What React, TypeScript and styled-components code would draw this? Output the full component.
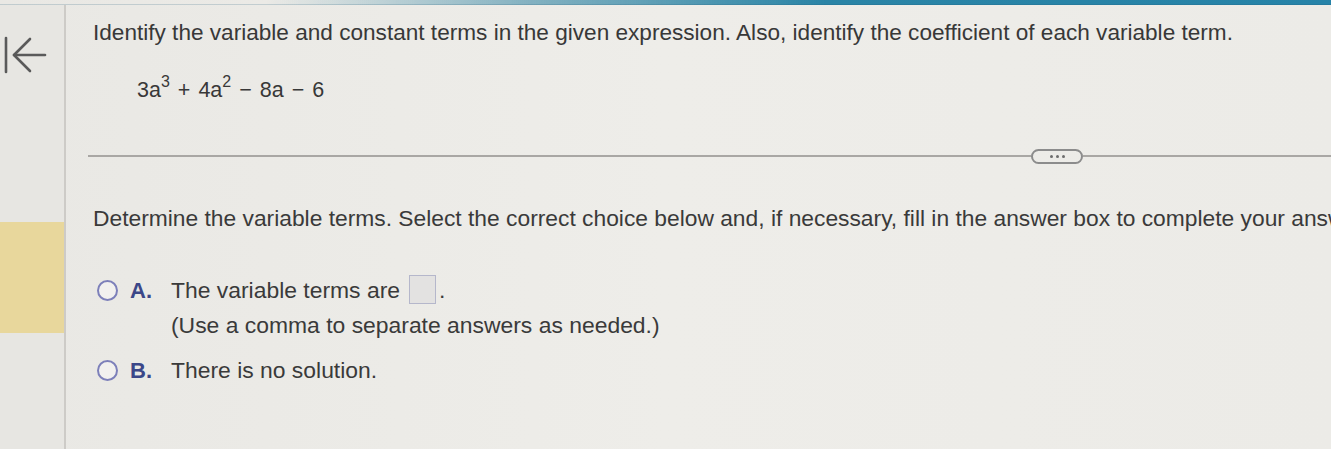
import React from "react";
import styled, { createGlobalStyle } from "styled-components";

const GlobalStyle = createGlobalStyle`
  html, body { margin: 0; padding: 0; }
  body {
    background: #ecebe7;
    font-family: "Liberation Sans", Arial, sans-serif;
    color: #3c3c3c;
  }
`;

const Page = styled.div`
  width: 1331px;
  height: 449px;
  overflow: hidden;
  display: flex;
  flex-direction: column;
  background: linear-gradient(90deg, #e9e8e4 0%, #eeede9 50%, #ecebe7 100%);
`;

const TopStrip = styled.div`
  height: 4px;
  flex: none;
  background: linear-gradient(90deg, rgba(42,128,160,0) 0%, rgba(42,128,160,0) 20%, rgba(42,128,160,0.55) 40%, #2a84a6 62%, #2683a8 100%);
  border-bottom: 1px solid rgba(30, 90, 120, 0.2);
`;

const Body = styled.div`
  flex: 1;
  display: flex;
  min-height: 0;
`;

const Sidebar = styled.div`
  width: 64px;
  flex: none;
  background: #e7e6e2;
  border-right: 2px solid #cdcbc7;
  display: flex;
  flex-direction: column;
`;

const BackButton = styled.button`
  margin: 31px 0 0 3px;
  padding: 0;
  width: 46px;
  height: 38px;
  border: none;
  background: transparent;
  display: flex;
  align-items: center;
  justify-content: flex-start;
  cursor: pointer;
`;

const Highlight = styled.div`
  margin-top: 148px;
  height: 111px;
  background: #e8d79c;
`;

const Main = styled.div`
  flex: 1;
  min-width: 0;
  padding: 15px 0 0 27px;
  overflow: hidden;
  white-space: nowrap;
`;

const Title = styled.div`
  font-size: 22.6px;
  line-height: 26px;
  color: #383838;
`;

const Expression = styled.div`
  margin: 31px 0 0 44px;
  font-size: 21.5px;
  line-height: 26px;
  color: #383838;
  sup {
    font-size: 16px;
    line-height: 0;
    position: relative;
    top: -2px;
    vertical-align: super;
  }
`;

const Op = styled.span`
  margin: 0 8px;
`;

const DividerRow = styled.div`
  margin: 45px 0 0 -5px;
  display: flex;
  align-items: center;
  height: 16px;
`;

const Rule = styled.div<{ $width?: number }>`
  height: 2px;
  background: #a9a7a4;
  ${(p) => (p.$width ? `width: ${p.$width}px; flex: none;` : "flex: 1;")}
`;

const MorePill = styled.div`
  width: 48px;
  height: 11px;
  border: 2px solid #8c8c8c;
  border-radius: 8px;
  display: flex;
  align-items: center;
  justify-content: center;
  gap: 3px;
  flex: none;
`;

const Dot = styled.span`
  width: 3px;
  height: 3px;
  border-radius: 50%;
  background: #6d6d6d;
`;

const Prompt = styled.div`
  margin-top: 41px;
  font-size: 22.8px;
  line-height: 26px;
  color: #3a3a3a;
`;

const Options = styled.div`
  margin-top: 42px;
  display: flex;
  flex-direction: column;
  gap: 10px;
`;

const OptionRow = styled.div`
  display: grid;
  grid-template-columns: 33px 41px auto;
  align-items: start;
  margin-left: 4px;
`;

const Radio = styled.span`
  width: 17px;
  height: 17px;
  border: 2px solid #7d80ba;
  border-radius: 50%;
  margin-top: 7px;
  background: #f2f1ef;
`;

const Letter = styled.span`
  font-size: 22px;
  line-height: 35px;
  font-weight: 700;
  color: #3b4788;
`;

const OptionText = styled.div`
  font-size: 22.9px;
  line-height: 35px;
  color: #3a3a3a;
`;

const AnswerBox = styled.span`
  display: inline-block;
  width: 25px;
  height: 27px;
  border: 1.5px solid #b5b7cb;
  background: #e3e2e1;
  vertical-align: middle;
  margin: -4px 3px 0 9px;
`;

function BackArrow() {
  return (
    <svg width="46" height="38" viewBox="0 0 46 38" fill="none" stroke="#5a5a5a" strokeWidth="2.6" strokeLinecap="round" strokeLinejoin="round">
      <line x1="3" y1="2" x2="3" y2="36" />
      <line x1="11" y1="19" x2="42" y2="19" />
      <polyline points="27,3 11,19 27,35" />
    </svg>
  );
}

export default function App() {
  return (
    <>
      <GlobalStyle />
      <Page>
        <TopStrip />
        <Body>
          <Sidebar>
            <BackButton aria-label="Back">
              <BackArrow />
            </BackButton>
            <Highlight />
          </Sidebar>
          <Main>
            <Title>
              Identify the variable and constant terms in the given expression. Also, identify the coefficient of each variable term.
            </Title>
            <Expression>
              3a<sup>3</sup>
              <Op>+</Op>4a<sup>2</sup>
              <Op>−</Op>8a<Op>−</Op>6
            </Expression>
            <DividerRow>
              <Rule $width={943} />
              <MorePill>
                <Dot />
                <Dot />
                <Dot />
              </MorePill>
              <Rule />
            </DividerRow>
            <Prompt>
              Determine the variable terms. Select the correct choice below and, if necessary, fill in the answer box to complete your answer.
            </Prompt>
            <Options>
              <OptionRow>
                <Radio />
                <Letter>A.</Letter>
                <OptionText>
                  The variable terms are<AnswerBox />.
                  <br />
                  (Use a comma to separate answers as needed.)
                </OptionText>
              </OptionRow>
              <OptionRow>
                <Radio />
                <Letter>B.</Letter>
                <OptionText>There is no solution.</OptionText>
              </OptionRow>
            </Options>
          </Main>
        </Body>
      </Page>
    </>
  );
}
